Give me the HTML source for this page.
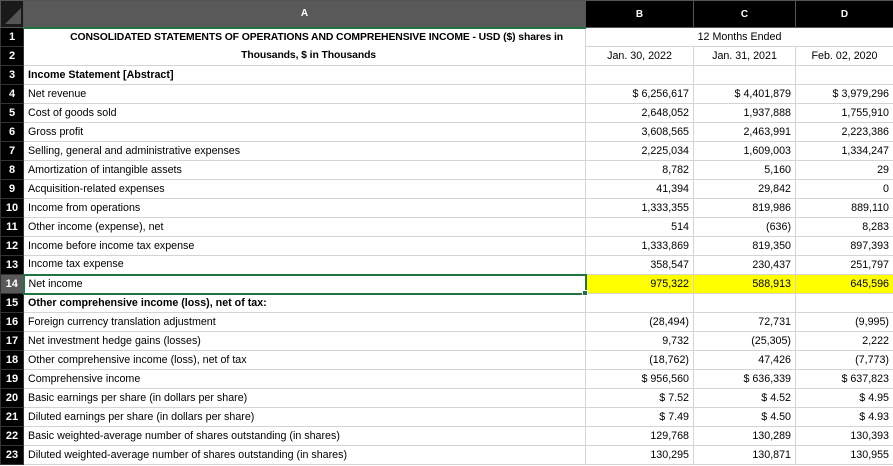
<!DOCTYPE html>
<html><head><meta charset="utf-8"><style>
*{margin:0;padding:0;box-sizing:border-box}
body{width:893px;height:466px;overflow:hidden;background:#fff;font-family:"Liberation Sans",sans-serif;font-size:10.7px;color:#000;position:relative}
table{border-collapse:collapse;table-layout:fixed;position:absolute;left:0;top:0;width:893px}
td{height:19px;border:1px solid #d4d4d4;white-space:nowrap;overflow:hidden;padding:0 4px;line-height:17px}
td.n{background:#000;color:#fff;font-weight:bold;text-align:center;border-color:#333;font-size:11px;padding:0}
tr.h td{height:27px;background:#000;color:#fff;font-weight:bold;text-align:center;border-color:#555;font-size:10px}
tr.h td.a{background:#595959;border-bottom:2px solid #217346}
td.r{text-align:right}
td.c{text-align:center}
td.b{font-weight:bold}
td.t{font-weight:bold;font-size:10.4px;letter-spacing:-0.1px;text-align:right}
tr.y td.r{background:#ffff00}
</style></head><body>
<table>
<colgroup><col style="width:23px"><col style="width:562px"><col style="width:108px"><col style="width:102px"><col style="width:98px"></colgroup>
<tr class="h"><td style="background:#1a1a1a;padding:0"><svg width="20" height="20" style="display:block;margin:4px 0 0 2px"><polygon points="18,2 18,18 2,18" fill="#555"/></svg></td><td class="a">A</td><td>B</td><td>C</td><td>D</td></tr>
<tr><td class="n">1</td><td class="t" style="border-bottom:none;padding-right:22px">CONSOLIDATED STATEMENTS OF OPERATIONS AND COMPREHENSIVE INCOME - USD ($) shares in</td><td colspan="3" class="c">12 Months Ended</td></tr>
<tr><td class="n">2</td><td class="t" style="border-top:none;padding-right:209px">Thousands, $ in Thousands</td><td class="c">Jan. 30, 2022</td><td class="c">Jan. 31, 2021</td><td class="c">Feb. 02, 2020</td></tr>
<tr><td class="n">3</td><td class="b">Income Statement [Abstract]</td><td></td><td></td><td></td></tr>
<tr><td class="n">4</td><td>Net revenue</td><td class="r">$ 6,256,617</td><td class="r">$ 4,401,879</td><td class="r">$ 3,979,296</td></tr>
<tr><td class="n">5</td><td>Cost of goods sold</td><td class="r">2,648,052</td><td class="r">1,937,888</td><td class="r">1,755,910</td></tr>
<tr><td class="n">6</td><td>Gross profit</td><td class="r">3,608,565</td><td class="r">2,463,991</td><td class="r">2,223,386</td></tr>
<tr><td class="n">7</td><td>Selling, general and administrative expenses</td><td class="r">2,225,034</td><td class="r">1,609,003</td><td class="r">1,334,247</td></tr>
<tr><td class="n">8</td><td>Amortization of intangible assets</td><td class="r">8,782</td><td class="r">5,160</td><td class="r">29</td></tr>
<tr><td class="n">9</td><td>Acquisition-related expenses</td><td class="r">41,394</td><td class="r">29,842</td><td class="r">0</td></tr>
<tr><td class="n">10</td><td>Income from operations</td><td class="r">1,333,355</td><td class="r">819,986</td><td class="r">889,110</td></tr>
<tr><td class="n">11</td><td>Other income (expense), net</td><td class="r">514</td><td class="r">(636)</td><td class="r">8,283</td></tr>
<tr><td class="n">12</td><td>Income before income tax expense</td><td class="r">1,333,869</td><td class="r">819,350</td><td class="r">897,393</td></tr>
<tr><td class="n">13</td><td>Income tax expense</td><td class="r">358,547</td><td class="r">230,437</td><td class="r">251,797</td></tr>
<tr class="y"><td class="n" style="background:#595959">14</td><td style="border:2px solid #217346">Net income</td><td class="r">975,322</td><td class="r">588,913</td><td class="r">645,596</td></tr>
<tr><td class="n">15</td><td class="b">Other comprehensive income (loss), net of tax:</td><td></td><td></td><td></td></tr>
<tr><td class="n">16</td><td>Foreign currency translation adjustment</td><td class="r">(28,494)</td><td class="r">72,731</td><td class="r">(9,995)</td></tr>
<tr><td class="n">17</td><td>Net investment hedge gains (losses)</td><td class="r">9,732</td><td class="r">(25,305)</td><td class="r">2,222</td></tr>
<tr><td class="n">18</td><td>Other comprehensive income (loss), net of tax</td><td class="r">(18,762)</td><td class="r">47,426</td><td class="r">(7,773)</td></tr>
<tr><td class="n">19</td><td>Comprehensive income</td><td class="r">$ 956,560</td><td class="r">$ 636,339</td><td class="r">$ 637,823</td></tr>
<tr><td class="n">20</td><td>Basic earnings per share (in dollars per share)</td><td class="r">$ 7.52</td><td class="r">$ 4.52</td><td class="r">$ 4.95</td></tr>
<tr><td class="n">21</td><td>Diluted earnings per share (in dollars per share)</td><td class="r">$ 7.49</td><td class="r">$ 4.50</td><td class="r">$ 4.93</td></tr>
<tr><td class="n">22</td><td>Basic weighted-average number of shares outstanding (in shares)</td><td class="r">129,768</td><td class="r">130,289</td><td class="r">130,393</td></tr>
<tr><td class="n">23</td><td>Diluted weighted-average number of shares outstanding (in shares)</td><td class="r">130,295</td><td class="r">130,871</td><td class="r">130,955</td></tr>
</table>
<div style="position:absolute;left:582px;top:290px;width:6px;height:6px;background:#217346;border:1px solid #fff"></div>
</body></html>
